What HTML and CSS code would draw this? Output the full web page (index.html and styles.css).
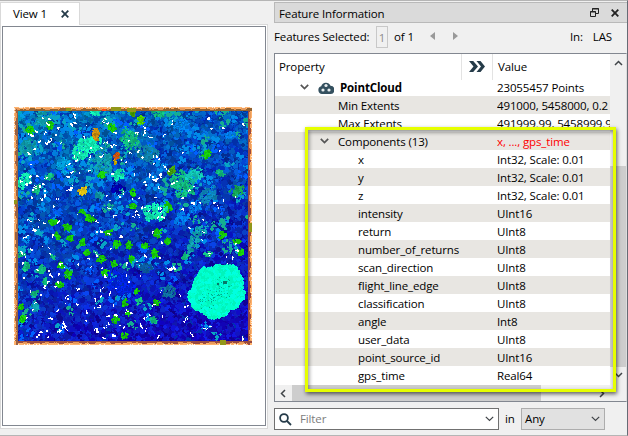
FILE: index.html
```html
<!DOCTYPE html>
<html lang="en">
<head>
<meta charset="utf-8">
<title>Feature Information</title>
<link rel="stylesheet" href="styles.css">
</head>
<body>
<div class="app">
  <section class="view">
    <div class="tab"><span>View 1</span><svg class="tab-close" viewBox="0 0 8 8"><path d="M.7.7l6.6 6.6M7.3.7L.7 7.3"/></svg></div>
    <div class="page"><div class="frame"><canvas id="cloud" width="238" height="238"></canvas></div></div>
  </section>
  <section class="info">
    <header class="title"><span>Feature Information</span>
      <svg class="float" viewBox="0 0 9 9"><path d="M2.5 3V.5h6v5H6M2 1h7M.5 3.5h5v5h-5zM0 4h6"/></svg>
      <svg class="close" viewBox="0 0 8 8"><path d="M.7.7l6.6 6.6M7.3.7L.7 7.3"/></svg>
    </header>
    <div class="selected">
      <span class="label">Features Selected:</span><span class="number">1</span><span>of 1</span>
      <svg class="prev" viewBox="0 0 5 8"><path d="M5 0v8L0 4z"/></svg>
      <svg class="next" viewBox="0 0 5 8"><path d="M0 0v8l5-4z"/></svg>
      <span class="in-label">In:</span><span>LAS</span>
    </div>
    <div class="table">
      <div class="content">
        <div class="head"><span>Property</span><span class="jump"><svg viewBox="0 0 16 11"><path d="M0 0h4.200L9 5.500 4.200 11H0l4.500-5.500zM7.500 0h4L16 5.500 11.500 11h-4L12 5.500z"/></svg></span><span class="value-head">Value</span></div>
        <div class="row root"><span><svg class="chev" viewBox="0 0 9 6"><path d="M.8.8l3.700 3.700L8.200.8"/></svg><svg class="cloud-icon" viewBox="0 0 16 13"><path class="body" d="M4 13a4 4 0 0 1-.8-7.800A5 5 0 0 1 12.500 4.800 4.100 4.100 0 0 1 12 13z"/><circle cx="8" cy="4.500" r="1.600"/><circle cx="5" cy="9" r="1.600"/><circle cx="11" cy="9" r="1.600"/></svg><b>PointCloud</b></span><span>23055457 Points</span></div>
        <div class="row"><span>Min Extents</span><span>491000, 5458000, 0.2</span></div>
        <div class="row"><span>Max Extents</span><span>491999.99, 5458999.99</span></div>
        <div class="row group"><span><svg class="chev" viewBox="0 0 9 6"><path d="M.8.8l3.700 3.700L8.200.8"/></svg>Components (13)</span><span class="red">x, ..., gps_time</span></div>
        <div class="row leaf"><span>x</span><span>Int32, Scale: 0.01</span></div>
        <div class="row leaf"><span>y</span><span>Int32, Scale: 0.01</span></div>
        <div class="row leaf"><span>z</span><span>Int32, Scale: 0.01</span></div>
        <div class="row leaf"><span>intensity</span><span>UInt16</span></div>
        <div class="row leaf"><span>return</span><span>UInt8</span></div>
        <div class="row leaf"><span>number_of_returns</span><span>UInt8</span></div>
        <div class="row leaf"><span>scan_direction</span><span>UInt8</span></div>
        <div class="row leaf"><span>flight_line_edge</span><span>UInt8</span></div>
        <div class="row leaf"><span>classification</span><span>UInt8</span></div>
        <div class="row leaf"><span>angle</span><span>Int8</span></div>
        <div class="row leaf"><span>user_data</span><span>UInt8</span></div>
        <div class="row leaf"><span>point_source_id</span><span>UInt16</span></div>
        <div class="row leaf"><span>gps_time</span><span>Real64</span></div>
      </div>
      <div class="vbar"><svg viewBox="0 0 9 6"><path d="M1 5l3.500-3.500L8 5"/></svg><i></i><svg viewBox="0 0 9 6"><path d="M1 1l3.500 3.500L8 1"/></svg></div>
      <div class="hbar"><svg viewBox="0 0 6 9"><path d="M5 1L1.500 4.500 5 8"/></svg><i></i><svg viewBox="0 0 6 9"><path d="M1 1l3.500 3.500L1 8"/></svg></div>
      <div class="highlight"></div>
    </div>
    <div class="filters">
      <div class="filter"><svg class="lens" viewBox="0 0 13 13"><circle cx="5" cy="5" r="3.900"/><path d="M8 8l4 4"/></svg><span>Filter</span><svg class="drop" viewBox="0 0 9 6"><path d="M.8.8l3.700 3.700L8.200.8"/></svg></div>
      <span class="in">in</span>
      <div class="any"><span>Any</span><svg class="drop" viewBox="0 0 9 6"><path d="M.8.8l3.700 3.700L8.200.8"/></svg></div>
    </div>
  </section>
</div>
<script src="cloud.js"></script>
</body>
</html>
```
FILE: styles.css
```css
* { box-sizing: border-box; }
body { margin: 0; font: 11.5px/18px "Open Sans", "Noto Sans", sans-serif; color: #000; letter-spacing: -.13px; }
svg { display: block; flex: none; fill: none; stroke: #404448; stroke-width: 1.5; }
.app { width: 628px; height: 436px; display: flex; background: #f0f0f0; border-top: 1px solid #b5b5b5; border-bottom: 1px solid #b5b5b5; border-right: 1px solid #666b75; overflow: hidden; white-space: nowrap; }
.view { width: 268px; padding-top: 1px; }
.tab { width: 80px; height: 23px; margin-bottom: -1px; position: relative; background: #fff; border: 1px solid #d9d9d9; border-bottom: 0; display: flex; align-items: center; padding: 0 10px 0 12px; justify-content: space-between; }
.tab-close { width: 8px; height: 8px; stroke: #253b49; stroke-width: 1.8; }
.page { height: 405px; border: 1px solid #d9d9d9; background: #fff; padding: 1px; }
.frame { height: 400px; border: 1px solid #828790; background: #fff; padding: 80px 0 0 11px; }
canvas { display: block; }
.info { width: 353px; margin-left: 6px; padding-top: 1px; }
.title { height: 21px; background: #dadada; border: 1px solid #b9b9b9; border-right: 0; display: flex; align-items: center; padding: 2px 8px 0 4px; }
.title .float { width: 9px; height: 9px; margin: -2px 12px 0 auto; stroke-width: 1; stroke: #222; }
.title .close { width: 8px; height: 8px; margin-top: -2px; stroke: #222; stroke-width: 1.8; }
.selected { height: 30px; display: flex; align-items: center; padding: 0 15px 2px 0; }
.number { width: 12px; height: 22px; line-height: 21px; border: 1px solid #c8c8c8; color: #8c8c8c; text-align: center; margin: 0 6px 0 7px; }
.label { width: 95px; }
.selected .prev, .selected .next { width: 5px; height: 8px; fill: #999; stroke: none; }
.selected .prev { margin-left: 16px; margin-top: -2px; }
.selected .next { margin-left: 18px; margin-top: -2px; }
.in-label { margin: 0 10px 0 auto; }
.table { height: 349px; border: 1px solid #828790; border-right-color: #ddd; background: #fff; display: grid; grid-template: 331px 16px / 335px 16px; position: relative; }
.content { overflow: hidden; background: #fff; }
.head { height: 24px; display: grid; grid-template-columns: 186px 32px 1fr; line-height: 26px; }
.head span:first-child { padding-left: 4px; }
.jump { border-left: 1px solid #e3e3e3; border-right: 1px solid #e3e3e3; padding: 7px 0 0 7px; }
.jump svg { width: 16px; height: 11px; fill: #253b49; stroke: none; }
.value-head { padding-left: 5px; }
.row { height: 18px; line-height: 19px; display: grid; grid-template-columns: 222px 1fr; }
.row:nth-child(odd) { background: #e8e6e2; }
.row > span { overflow: hidden; }
.row > span:first-child { padding-left: 63px; }
.row.leaf > span:first-child { padding-left: 83px; }
.row.root > span:first-child, .row.group > span:first-child { display: flex; align-items: center; }
.row.root > span:first-child { padding-left: 25px; }
.row.group > span:first-child { padding-left: 45px; }
.chev { width: 9px; height: 6px; margin-right: 9px; stroke: #555; stroke-width: 1.7; }
.cloud-icon { width: 16px; height: 13px; margin-right: 6px; fill: #e8eef0; stroke: none; }
.cloud-icon .body { fill: #34505f; }
.red { color: #f00; }
.vbar { background: #f0f0f0; display: flex; flex-direction: column; align-items: center; padding-top: 6px; }
.vbar svg { width: 9px; height: 6px; }
.vbar i { width: 16px; height: 201px; background: #cdcdcd; margin: 100px 0 5px; }
.hbar { grid-column: 1 / 3; background: #f0f0f0; display: flex; align-items: center; padding-left: 5px; }
.hbar svg { width: 6px; height: 9px; }
.hbar i { width: 249px; height: 16px; background: #cdcdcd; margin: 0 58px 0 6px; }
.highlight { position: absolute; left: 30px; top: 73px; width: 311px; height: 265px; border: 3px solid #e6ff00; box-shadow: 1px 2px 4px #0009, inset 1px 2px 4px #0007; }
.filters { display: flex; margin-top: 6px; align-items: center; }
.filter { width: 225px; height: 22px; background: #fff; border: 1px solid #707070; display: flex; align-items: center; padding: 0 4px; color: #7d7d7d; }
.lens { width: 13px; height: 13px; stroke: #253b49; stroke-width: 1.8; margin-right: 8px; }
.drop { width: 9px; height: 6px; margin-left: auto; stroke-width: 1.2; }
.in { margin: 0 7px 0 6px; width: 9px; }
.any { width: 84px; height: 22px; border: 1px solid #adadad; background: #e1e1e1; display: flex; align-items: center; padding: 0 4px 0 3px; }
```
FILE: cloud.js
```js
const ctx = document.getElementById('cloud').getContext('2d');
let seed = 71;
const rand = () => { seed = (seed * 1664525 + 1013904223) >>> 0; return seed / 4294967296; };
const size = 238, ox = 14, oy = 107;
const dot = (x, y, r, color) => {
  ctx.fillStyle = color;
  ctx.fillRect(Math.round(x - r), Math.round(y - r / 2), Math.round(r * 2), Math.round(r));
  ctx.fillRect(Math.round(x - r / 2), Math.round(y - r), Math.round(r), Math.round(r * 2));
};

// Ground: teal-blue in the north-west, deep indigo in the south-east.
ctx.fillStyle = '#0030b0';
ctx.fillRect(0, 0, size, size);
for (let i = 0; i < 13000; i++) {
  const x = rand() * size, y = rand() * size;
  const t = Math.min(1, (x * 0.35 + y) / 290);
  const n = rand() - 0.5;
  const patch = Math.sin(x * 0.13 + Math.sin(y * 0.09) * 2) * Math.sin(y * 0.16 + x * 0.05);
  const g = Math.max(0, 108 * (1 - t) + 6 + n * 80 * (1 - t * 0.4) + patch * 26 * (1 - t));
  const b = 186 + n * 60 + (rand() - 0.5) * 50;
  dot(x, y, 1.2 + rand() * 1.8, `rgb(${Math.round(t * t * 18)},${Math.round(g)},${Math.round(b)})`);
}
for (let i = 0; i < 480; i++) {
  const x = rand() * size, y = rand() * size, t = (x * 0.35 + y) / 290;
  if (rand() < t * 0.9) continue;
  const c = rand();
  const color = c < .4 ? '#008ce8' : c < .68 ? '#08a4c4' : c < .85 ? '#0060ff' : '#15ad90';
  for (let k = 0; k < 6; k++) dot(x + (rand() - .5) * 9, y + (rand() - .5) * 8, 1 + rand(), color);
}

// Tree crowns and other tall returns: x, y, radius, rgb.
const G = [22, 200, 10], T = [16, 185, 125], C = [16, 230, 175], A = [14, 155, 170], B = [0, 125, 235];
const crowns = [
 [43,117,8,A],[28,147,8,A],[65,166,8,[0,160,220]],[103,162,11,A],[85,148,10,C],[92,144,8,C],[79,154,7,C],[26,178,6,C],[21,184,5,C],
 [130,140,10,T],[118,175,6,C],[50,177,5,T],[37,190,5,T],[100,195,5,A],[118,189,6,[0,0,170]],[95,112,5,C],
 [30,130,5,G],[50,125,5,G],[96,133,5,[196,138,16]],[96,137,4,[196,138,16]],[117,156,4,[195,80,12]],[115,162,2,[200,170,0]],[83,191,5,[220,190,16]],[112,128,4,G],[102,175,4,G],
 [133,193,4,G],[133,206,4,G],[90,219,5,G],[53,222,4,G],[82,212,3,G],[141,120,5,[80,215,0]],[133,113,4,[70,155,0]],[207,154,5,G],[172,171,5,[65,155,12]],
 [237,191,6,[20,160,85]],[168,207,5,G],[155,212,10,C],[182,184,12,T],[195,175,8,[16,190,175]],[147,153,10,[14,125,165]],[208,195,9,[12,130,185]],[158,113,6,T],[230,135,5,B],[220,173,5,T],[183,125,7,B],[182,218,7,B],[195,207,6,B],
 [67,227,5,G],[57,236,4,G],[70,238,4,G],[83,243,4,G],[87,253,4,G],[102,259,5,G],[117,244,5,G],[108,233,4,G],[106,273,5,G],[114,263,4,G],[132,259,4,G],[129,245,4,G],[61,265,4,G],[68,274,5,G],[53,257,3,T],[26,267,5,T],[21,255,4,T],[42,269,5,T],[45,282,4,T],[59,284,4,G],[35,293,4,T],[35,307,5,A],[21,307,3,G],[23,319,4,G],
 [125,302,4,G],[115,319,5,G],[124,336,4,G],[137,291,3,G],[128,313,3,G],[120,283,12,[0,35,225]],[158,233,5,G],[145,246,4,G],[155,254,5,G],[168,241,4,G],[222,235,5,G],[237,242,4,G],[241,252,4,G],[139,302,4,T],[156,303,4,G],[154,320,4,T],[169,291,7,[14,110,160]],[208,254,4,T],[200,232,6,A],[194,241,6,A],[189,250,5,A],[185,257,4,T],[145,268,6,[10,90,160]]
];
for (const [cx, cy, r, rgb] of crowns) {
  const p = rand() * 6.283;
  const small = r < 6;
  for (let i = 0; i < r * r * 1.2; i++) {
    const a = rand() * 6.283;
    const lobe = .85 + .2 * Math.sin(a * 2 + p) + .15 * Math.sin(a * 5 + p * 2);
    const d = Math.sqrt(rand()) * r * lobe * (small ? .9 : 1.15);
    const v = .84 + rand() * .3;
    dot(cx - ox + Math.cos(a) * d, cy - oy + Math.sin(a) * d, .9 + rand() * .8, `rgb(${rgb.map(c => Math.min(255, Math.round(c * v)))})`);
  }
}

// Gaps without returns.
const gap = (x, y, n) => {
  ctx.fillStyle = '#fff';
  const dx = (rand() - .5) * 1.4, dy = (rand() - .5) * 1.4;
  for (let k = 0; k < n; k++) {
    ctx.fillRect(Math.round(x), Math.round(y), rand() < .3 ? 2 : 1, rand() < .3 ? 2 : 1);
    x += dx + (rand() - .5) * 1.8; y += dy + (rand() - .5) * 1.8;
  }
};
for (let i = 0; i < 310; i++) {
  const x = 7 + rand() * 224, y = 7 + rand() * 224;
  if (x > 155 && rand() < .62) continue;
  gap(x, y, 1 + rand() * 3.5);
}
[[20,181],[29,176],[62,326],[64,324],[62,328],[97,328],[103,327],[114,314],[112,335],[175,269],[171,268],[187,316],[193,203],[66,190],[36,132],[20,251],[142,327],[143,318],[157,338],[143,134],[111,174],[152,179]].forEach(([x,y]) => gap(x-ox,y-oy,8));

// The round raised area in the south-east.
for (let i = 0; i < 2600; i++) {
  const a = rand() * 6.283, q = 26 + Math.sin(a * 5) * 1.5 + Math.sin(a * 2) * -1.8 + Math.sin(a * 11) * .8, d = Math.sqrt(rand()) * q;
  const c = rand() < .3 ? '#00f4bc' : rand() < .5 ? '#00ffe0' : '#00ffcc';
  dot(203 + Math.cos(a) * d * 1.03, 184 + Math.sin(a) * d, 1 + rand(), c);
}
for (let i = 0; i < 65; i++) {
  const p = [[211, 176], [193, 188], [208, 186], [192, 196]][i % 4];
  ctx.fillStyle = rand() < .5 ? '#00a98a' : '#00c9a0';
  ctx.fillRect(Math.round(p[0] + (rand() - .5) * 18), Math.round(p[1] + (rand() - .5) * 12), 1, 1);
}
ctx.fillStyle = '#087868';
ctx.fillRect(209, 174, 4, 3);
ctx.fillRect(203, 176, 2, 2);

// Ragged edge of the tile.
for (let i = 0; i < size; i++) {
  for (let s = 0; s < 4; s++) {
    const put = (d, w, c) => {
      ctx.fillStyle = c;
      if (s === 0) ctx.fillRect(i, d, 1, w);
      if (s === 1) ctx.fillRect(i, size - d - w, 1, w);
      if (s === 2) ctx.fillRect(d, i, w, 1);
      if (s === 3) ctx.fillRect(size - d - w, i, w, 1);
    };
    const brown = s === 0 ? '#93622f' : s === 2 ? '#986043' : '#984a40';
    put(0, 4, brown);
    const noise = Math.sin(i * .61 + s) + Math.sin(i * .23) + rand() * 1.5;
    put(0, noise > .1 ? 2 : 1, '#ffb36e');
    if (noise > 1.5) put(1, 2, '#e79a5b');
    if (rand() < .2) put(0, 1, '#fff0e2');
  }
}
[[206,233,6,5],[235,116,3,9],[52,1,5,3],[97,0,10,4],[113,1,9,4],[0,93,3,4]].forEach(r => { ctx.fillStyle = '#929719'; ctx.fillRect(...r); });
ctx.fillStyle = '#ff4a12';
ctx.fillRect(88, 2, 4, 2);
```
